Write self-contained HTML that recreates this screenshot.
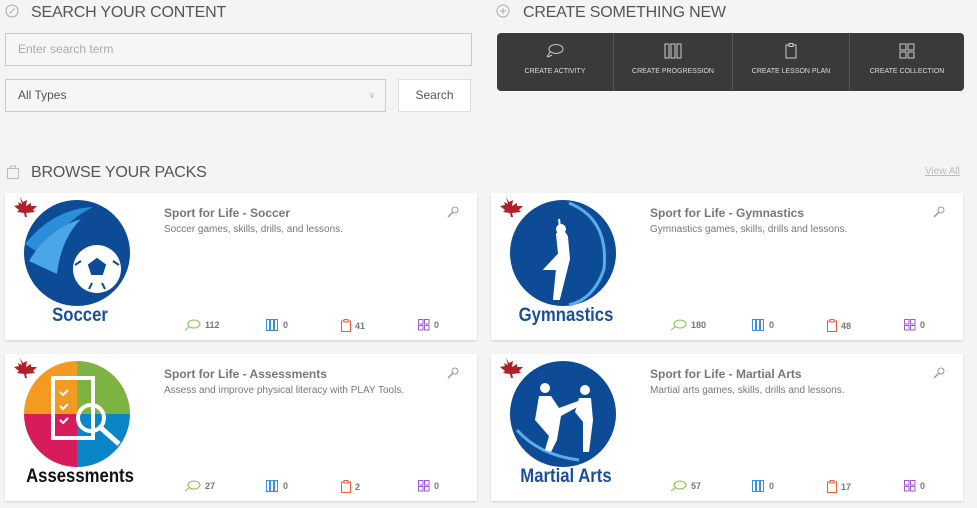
<!DOCTYPE html><html><head><style>
body{margin:0;background:#f4f4f4;font-family:"Liberation Sans",sans-serif;width:977px;height:508px;overflow:hidden;position:relative}
.a{position:absolute}
h2{position:absolute;margin:0;font-weight:normal;font-size:16px;color:#555;letter-spacing:-0.2px}
.inp{position:absolute;background:#f6f6f6;border:1px solid #c9c9c9;box-sizing:border-box;font-size:12px;color:#aaa;padding-left:12px}
.card{position:absolute;width:472px;height:147px;background:#fff;box-shadow:0 1px 2px rgba(0,0,0,.15)}
.t{position:absolute;left:159px;top:13px;font-size:12px;font-weight:bold;color:#777}
.d{position:absolute;left:159px;top:31px;font-size:10px;color:#777}
.s{position:absolute;top:126px;font-size:9px;font-weight:bold;color:#777;display:flex;align-items:center;gap:4px}
.nm{position:absolute;left:0;width:150px;text-align:center;top:112px;font-size:19px;font-weight:bold;color:#1c4f9a;transform:scaleX(.88)}
.leaf{position:absolute;left:0;top:2px}
.btn{position:absolute;top:0;height:58px;border-right:1px solid #555;color:#ddd;font-size:7px;text-align:center}
.btn div{margin-top:7px}
</style></head><body>
<svg class="a" style="left:5px;top:4px" width="14" height="14"><circle cx="7" cy="7" r="6" fill="none" stroke="#aaa"/><path d="M4.5 9.5 L9.5 4.5" stroke="#aaa"/></svg>
<h2 style="left:31px;top:4px">SEARCH YOUR CONTENT</h2>
<div class="inp" style="left:5px;top:33px;width:467px;height:33px;line-height:31px">Enter search term</div>
<div class="inp" style="left:5px;top:79px;width:381px;height:33px;line-height:31px;color:#555">All Types<span style="position:absolute;right:10px;color:#bbb;font-size:9px">&#8744;</span></div>
<div class="inp" style="left:398px;top:79px;width:73px;height:33px;line-height:31px;background:#fff;border-color:#ddd;color:#555;padding:0;text-align:center">Search</div>
<svg class="a" style="left:496px;top:4px" width="14" height="14"><circle cx="7" cy="7" r="6" fill="none" stroke="#aaa"/><path d="M7 4v6M4 7h6" stroke="#aaa"/></svg>
<h2 style="left:523px;top:4px">CREATE SOMETHING NEW</h2>
<div class="a" style="left:497px;top:33px;width:467px;height:58px;background:#3a3a3a;border-radius:4px;overflow:hidden">
<div class="btn" style="left:0;width:116px"><svg style="margin-top:10px" width="20" height="16"><ellipse cx="11" cy="6" rx="7" ry="4.5" fill="none" stroke="#ccc"/><path d="M5 9 L2 14 M7 12 L3 14" stroke="#ccc" fill="none"/></svg><div>CREATE ACTIVITY</div></div>
<div class="btn" style="left:117px;width:118px"><svg style="margin-top:10px" width="20" height="16"><rect x="2" y="1" width="4" height="14" fill="none" stroke="#ccc"/><rect x="8" y="1" width="4" height="14" fill="none" stroke="#ccc"/><rect x="14" y="1" width="4" height="14" fill="none" stroke="#ccc"/></svg><div>CREATE PROGRESSION</div></div>
<div class="btn" style="left:236px;width:116px"><svg style="margin-top:10px" width="20" height="16"><rect x="5" y="2" width="10" height="13" fill="none" stroke="#ccc"/><rect x="8" y="0.5" width="4" height="3" fill="#3a3a3a" stroke="#ccc"/></svg><div>CREATE LESSON PLAN</div></div>
<div class="btn" style="left:353px;width:114px;border:0"><svg style="margin-top:10px" width="20" height="16"><rect x="3" y="1" width="6" height="6" fill="none" stroke="#ccc"/><rect x="11" y="1" width="6" height="6" fill="none" stroke="#ccc"/><rect x="3" y="9" width="6" height="6" fill="none" stroke="#ccc"/><rect x="11" y="9" width="6" height="6" fill="none" stroke="#ccc"/></svg><div>CREATE COLLECTION</div></div>
</div>
<svg class="a" style="left:6px;top:164px" width="14" height="16"><rect x="1.5" y="4.5" width="11" height="10" fill="none" stroke="#bbb"/><path d="M4.5 4.5V2h5v2.5" fill="none" stroke="#bbb"/></svg>
<h2 style="left:31px;top:164px">BROWSE YOUR PACKS</h2>
<div class="a" style="left:925px;top:166px;font-size:10px;color:#bbb;text-decoration:underline">View All</div>

<div class="card" style="left:5px;top:193px">
<svg class="leaf" width="34" height="26"><path d="M15 2l3 5 4-2-1 6 5-3 0 3 6 0-4 4 2 2-9 1 1 4-2 0-1-4-7-1 2-2-5-4 5-1-1-3 4 2z" fill="#b0202a"/></svg>
<svg class="a" style="left:18px;top:6px" width="110" height="110"><circle cx="54" cy="54" r="53" fill="#0d4b97"/><path d="M2 45 Q30 10 70 8 Q35 25 25 60Z" fill="#2a8fd8"/><path d="M6 62 Q25 30 58 20 Q38 40 34 75Z" fill="#4aa6e6"/><circle cx="74" cy="70" r="24" fill="#fff"/><path d="M74 60l8 6-3 9h-10l-3-9z M52 66l6-4 M96 66l-6-4 M66 90l3-6 M82 90l-3-6" fill="#0d4b97" stroke="#0d4b97" stroke-width="2"/></svg>
<div class="nm">Soccer</div>
<div class="t">Sport for Life - Soccer</div><div class="d">Soccer games, skills, drills, and lessons.</div>
<svg class="a" style="left:442px;top:13px" width="12" height="12"><circle cx="8" cy="4" r="3" fill="none" stroke="#999"/><path d="M6 6L1 11" stroke="#999" stroke-width="1.5"/></svg>
<div class="s" style="left:179px"><svg width="17" height="12"><ellipse cx="10" cy="5" rx="6" ry="4" fill="none" stroke="#7dc142"/><path d="M5 8L1 11" stroke="#7dc142"/></svg>112</div>
<div class="s" style="left:261px"><svg width="13" height="12"><rect x=".5" y=".5" width="3" height="11" fill="none" stroke="#3b8fe0"/><rect x="4.5" y=".5" width="3" height="11" fill="none" stroke="#3b8fe0"/><rect x="8.5" y=".5" width="3" height="11" fill="none" stroke="#3b8fe0"/></svg>0</div>
<div class="s" style="left:336px"><svg width="10" height="13"><rect x=".5" y="2" width="9" height="10.5" fill="none" stroke="#ee5a3a"/><rect x="3" y=".5" width="4" height="2.5" fill="#fff" stroke="#ee5a3a"/></svg>41</div>
<div class="s" style="left:413px"><svg width="12" height="12"><rect x=".5" y=".5" width="4.5" height="4.5" fill="none" stroke="#9b59d6"/><rect x="6.5" y=".5" width="4.5" height="4.5" fill="none" stroke="#9b59d6"/><rect x=".5" y="6.5" width="4.5" height="4.5" fill="none" stroke="#9b59d6"/><rect x="6.5" y="6.5" width="4.5" height="4.5" fill="none" stroke="#9b59d6"/></svg>0</div>
</div>

<div class="card" style="left:491px;top:193px">
<svg class="leaf" width="34" height="26"><path d="M15 2l3 5 4-2-1 6 5-3 0 3 6 0-4 4 2 2-9 1 1 4-2 0-1-4-7-1 2-2-5-4 5-1-1-3 4 2z" fill="#b0202a"/></svg>
<svg class="a" style="left:18px;top:6px" width="110" height="110"><circle cx="54" cy="54" r="53" fill="#0d4b97"/><path d="M60 4 Q100 20 95 70 Q85 100 60 106" fill="none" stroke="#5aaee8" stroke-width="3"/><path d="M48 35 Q55 30 58 38 L60 60 L50 100 L45 100 L48 70 L36 70 L50 55Z M50 20 L52 36" fill="#fff" stroke="#fff" stroke-width="2"/><circle cx="52" cy="30" r="5" fill="#fff"/></svg>
<div class="nm">Gymnastics</div>
<div class="t">Sport for Life - Gymnastics</div><div class="d">Gymnastics games, skills, drills and lessons.</div>
<svg class="a" style="left:442px;top:13px" width="12" height="12"><circle cx="8" cy="4" r="3" fill="none" stroke="#999"/><path d="M6 6L1 11" stroke="#999" stroke-width="1.5"/></svg>
<div class="s" style="left:179px"><svg width="17" height="12"><ellipse cx="10" cy="5" rx="6" ry="4" fill="none" stroke="#7dc142"/><path d="M5 8L1 11" stroke="#7dc142"/></svg>180</div>
<div class="s" style="left:261px"><svg width="13" height="12"><rect x=".5" y=".5" width="3" height="11" fill="none" stroke="#3b8fe0"/><rect x="4.5" y=".5" width="3" height="11" fill="none" stroke="#3b8fe0"/><rect x="8.5" y=".5" width="3" height="11" fill="none" stroke="#3b8fe0"/></svg>0</div>
<div class="s" style="left:336px"><svg width="10" height="13"><rect x=".5" y="2" width="9" height="10.5" fill="none" stroke="#ee5a3a"/><rect x="3" y=".5" width="4" height="2.5" fill="#fff" stroke="#ee5a3a"/></svg>48</div>
<div class="s" style="left:413px"><svg width="12" height="12"><rect x=".5" y=".5" width="4.5" height="4.5" fill="none" stroke="#9b59d6"/><rect x="6.5" y=".5" width="4.5" height="4.5" fill="none" stroke="#9b59d6"/><rect x=".5" y="6.5" width="4.5" height="4.5" fill="none" stroke="#9b59d6"/><rect x="6.5" y="6.5" width="4.5" height="4.5" fill="none" stroke="#9b59d6"/></svg>0</div>
</div>

<div class="card" style="left:5px;top:354px">
<svg class="leaf" width="34" height="26"><path d="M15 2l3 5 4-2-1 6 5-3 0 3 6 0-4 4 2 2-9 1 1 4-2 0-1-4-7-1 2-2-5-4 5-1-1-3 4 2z" fill="#b0202a"/></svg>
<svg class="a" style="left:18px;top:6px" width="110" height="110"><path d="M54 54V1A53 53 0 0 0 1 54Z" fill="#f39a21"/><path d="M54 54V1A53 53 0 0 1 107 54Z" fill="#7cb342"/><path d="M54 54H1A53 53 0 0 0 54 107Z" fill="#d81b5b"/><path d="M54 54H107A53 53 0 0 1 54 107Z" fill="#0a86c8"/><rect x="30" y="18" width="40" height="60" fill="none" stroke="#fff" stroke-width="4"/><circle cx="68" cy="58" r="13" fill="none" stroke="#fff" stroke-width="4"/><path d="M78 68L96 84" stroke="#fff" stroke-width="5"/><path d="M37 32l3 3 5-5M37 46l3 3 5-5M37 60l3 3 5-5" stroke="#fff" stroke-width="2" fill="none"/></svg>
<div class="nm" style="color:#111">Assessments</div>
<div class="t">Sport for Life - Assessments</div><div class="d">Assess and improve physical literacy with PLAY Tools.</div>
<svg class="a" style="left:442px;top:13px" width="12" height="12"><circle cx="8" cy="4" r="3" fill="none" stroke="#999"/><path d="M6 6L1 11" stroke="#999" stroke-width="1.5"/></svg>
<div class="s" style="left:179px"><svg width="17" height="12"><ellipse cx="10" cy="5" rx="6" ry="4" fill="none" stroke="#7dc142"/><path d="M5 8L1 11" stroke="#7dc142"/></svg>27</div>
<div class="s" style="left:261px"><svg width="13" height="12"><rect x=".5" y=".5" width="3" height="11" fill="none" stroke="#3b8fe0"/><rect x="4.5" y=".5" width="3" height="11" fill="none" stroke="#3b8fe0"/><rect x="8.5" y=".5" width="3" height="11" fill="none" stroke="#3b8fe0"/></svg>0</div>
<div class="s" style="left:336px"><svg width="10" height="13"><rect x=".5" y="2" width="9" height="10.5" fill="none" stroke="#ee5a3a"/><rect x="3" y=".5" width="4" height="2.5" fill="#fff" stroke="#ee5a3a"/></svg>2</div>
<div class="s" style="left:413px"><svg width="12" height="12"><rect x=".5" y=".5" width="4.5" height="4.5" fill="none" stroke="#9b59d6"/><rect x="6.5" y=".5" width="4.5" height="4.5" fill="none" stroke="#9b59d6"/><rect x=".5" y="6.5" width="4.5" height="4.5" fill="none" stroke="#9b59d6"/><rect x="6.5" y="6.5" width="4.5" height="4.5" fill="none" stroke="#9b59d6"/></svg>0</div>
</div>

<div class="card" style="left:491px;top:354px">
<svg class="leaf" width="34" height="26"><path d="M15 2l3 5 4-2-1 6 5-3 0 3 6 0-4 4 2 2-9 1 1 4-2 0-1-4-7-1 2-2-5-4 5-1-1-3 4 2z" fill="#b0202a"/></svg>
<svg class="a" style="left:18px;top:6px" width="110" height="110"><circle cx="54" cy="54" r="53" fill="#0d4b97"/><path d="M8 70 Q30 95 70 100" fill="none" stroke="#5aaee8" stroke-width="3"/><circle cx="36" cy="28" r="5" fill="#fff"/><path d="M30 36 L42 36 L50 48 L72 40 L74 44 L52 56 L48 80 L42 92 L36 90 L40 76 L26 60Z" fill="#fff"/><circle cx="76" cy="30" r="5" fill="#fff"/><path d="M70 38 L82 38 L84 60 L80 92 L74 92 L74 62 L66 52Z" fill="#fff"/></svg>
<div class="nm">Martial Arts</div>
<div class="t">Sport for Life - Martial Arts</div><div class="d">Martial arts games, skills, drills and lessons.</div>
<svg class="a" style="left:442px;top:13px" width="12" height="12"><circle cx="8" cy="4" r="3" fill="none" stroke="#999"/><path d="M6 6L1 11" stroke="#999" stroke-width="1.5"/></svg>
<div class="s" style="left:179px"><svg width="17" height="12"><ellipse cx="10" cy="5" rx="6" ry="4" fill="none" stroke="#7dc142"/><path d="M5 8L1 11" stroke="#7dc142"/></svg>57</div>
<div class="s" style="left:261px"><svg width="13" height="12"><rect x=".5" y=".5" width="3" height="11" fill="none" stroke="#3b8fe0"/><rect x="4.5" y=".5" width="3" height="11" fill="none" stroke="#3b8fe0"/><rect x="8.5" y=".5" width="3" height="11" fill="none" stroke="#3b8fe0"/></svg>0</div>
<div class="s" style="left:336px"><svg width="10" height="13"><rect x=".5" y="2" width="9" height="10.5" fill="none" stroke="#ee5a3a"/><rect x="3" y=".5" width="4" height="2.5" fill="#fff" stroke="#ee5a3a"/></svg>17</div>
<div class="s" style="left:413px"><svg width="12" height="12"><rect x=".5" y=".5" width="4.5" height="4.5" fill="none" stroke="#9b59d6"/><rect x="6.5" y=".5" width="4.5" height="4.5" fill="none" stroke="#9b59d6"/><rect x=".5" y="6.5" width="4.5" height="4.5" fill="none" stroke="#9b59d6"/><rect x="6.5" y="6.5" width="4.5" height="4.5" fill="none" stroke="#9b59d6"/></svg>0</div>
</div>
</body></html>
